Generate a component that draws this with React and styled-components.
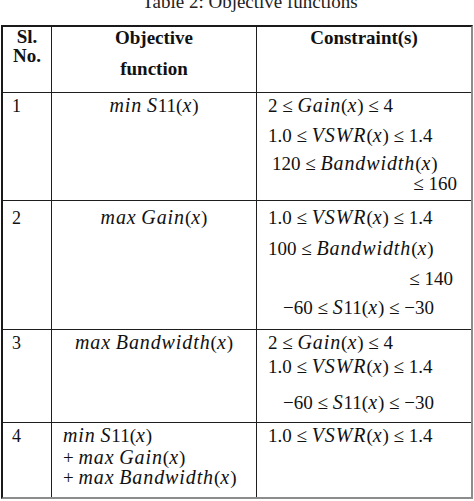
import styled, { createGlobalStyle } from "styled-components";

const GlobalStyle = createGlobalStyle`
    html, body {
        margin: 0;
        background: #fff;
    }
    body {
        font-family: "Liberation Serif", "Times New Roman", serif;
        color: #111;
    }
`;

const rows = [
    {
        no: "1",
        top: 3,
        objAlign: "center",
        obj: [{ t: "min S11(x)" }],
        cons: [
            { t: "2 ≤ Gain(x) ≤ 4" },
            { t: "1.0 ≤ VSWR(x) ≤ 1.4", gap: 10 },
            { t: "120 ≤ Bandwidth(x)", gap: 8, indent: 4 },
            { t: "≤ 160", align: "right" },
        ],
    },
    {
        no: "2",
        top: 7,
        objAlign: "center",
        obj: [{ t: "max Gain(x)" }],
        cons: [
            { t: "1.0 ≤ VSWR(x) ≤ 1.4" },
            { t: "100 ≤ Bandwidth(x)", gap: 11 },
            { t: "≤ 140", gap: 10, align: "right", right: 4 },
            { t: "−60 ≤ S11(x) ≤ −30", gap: 9, indent: 15 },
        ],
    },
    {
        no: "3",
        top: 3,
        objAlign: "center",
        obj: [{ t: "max Bandwidth(x)" }],
        cons: [
            { t: "2 ≤ Gain(x) ≤ 4" },
            { t: "1.0 ≤ VSWR(x) ≤ 1.4", gap: 4 },
            { t: "−60 ≤ S11(x) ≤ −30", gap: 16, indent: 15 },
        ],
    },
    {
        no: "4",
        top: 3,
        objAlign: "left",
        obj: [
            { t: "min S11(x)" },
            { t: "+ max Gain(x)", gap: 2 },
            { t: "+ max Bandwidth(x)" },
        ],
        cons: [{ t: "1.0 ≤ VSWR(x) ≤ 1.4" }],
    },
];

// letters italic, digits and signs upright, like Word's math font
function Formula({ text }) {
    return text
        .split(/([A-Za-z]+)/)
        .map((part, i) =>
            /[A-Za-z]/.test(part) ? <Var key={i}>{part}</Var> : part
        );
}

export default function App() {
    return (
        <>
            <GlobalStyle />
            <Page>
                <Caption>Table 2: Objective functions</Caption>
                <Table>
                    <Cell>
                        <Head>Sl.</Head>
                        <Head>No.</Head>
                    </Cell>
                    <Cell>
                        <Head $gap={1}>Objective</Head>
                        <Head $gap={12}>function</Head>
                    </Cell>
                    <Cell $lastCol>
                        <Head $gap={1}>Constraint(s)</Head>
                    </Cell>

                    {rows.map((row, r) => {
                        const lastRow = r === rows.length - 1;
                        return [
                            <NumCell key={`n${r}`} $top={row.top} $lastRow={lastRow}>
                                {row.no}
                            </NumCell>,
                            <ObjCell
                                key={`o${r}`}
                                $top={row.top}
                                $align={row.objAlign}
                                $lastRow={lastRow}
                            >
                                {row.obj.map((l, i) => (
                                    <Line key={i} $gap={l.gap}>
                                        <Formula text={l.t} />
                                    </Line>
                                ))}
                            </ObjCell>,
                            <ConsCell
                                key={`c${r}`}
                                $top={row.top}
                                $lastRow={lastRow}
                                $lastCol
                            >
                                {row.cons.map((l, i) => (
                                    <Line
                                        key={i}
                                        $gap={l.gap}
                                        $indent={l.indent}
                                        $align={l.align}
                                        $right={l.right}
                                    >
                                        <Formula text={l.t} />
                                    </Line>
                                ))}
                            </ConsCell>,
                        ];
                    })}
                </Table>
            </Page>
        </>
    );
}

const Page = styled.div`
    width: 474px;
    height: 501px;
    overflow: hidden;
`;

const Caption = styled.div`
    margin-top: -8px;
    padding-left: 26px;
    font-size: 19px;
    line-height: 19px;
    text-align: center;
    color: #222;
`;

const Table = styled.div`
    margin: 14px 0 0 1px;
    width: 472px;
    height: 474px;
    box-sizing: border-box;
    border: 2px solid;
    border-color: #1a1a1a #8c8c8c #8c8c8c #1a1a1a;
    display: grid;
    grid-template-columns: 49px 205px 1fr;
    grid-template-rows: 66px 108px 129px 93px 1fr;
`;

const Cell = styled.div`
    box-sizing: border-box;
    min-width: 0;
    border-right: ${(p) => (p.$lastCol ? "none" : "1px solid #1e1e1e")};
    border-bottom: ${(p) => (p.$lastRow ? "none" : "1px solid #1e1e1e")};
    padding-top: ${(p) => p.$top || 0}px;
`;

const Head = styled.div`
    margin-top: ${(p) => p.$gap || 0}px;
    font-weight: bold;
    font-size: 19px;
    line-height: 19px;
    text-align: center;
`;

const NumCell = styled(Cell)`
    padding-left: 9px;
    font-size: 18px;
    line-height: 20px;
`;

const ObjCell = styled(Cell)`
    padding-left: ${(p) => (p.$align === "left" ? "11px" : "0")};
    text-align: ${(p) => p.$align};
    font-size: 19px;
    line-height: 20px;
`;

const ConsCell = styled(Cell)`
    padding-left: 11px;
    padding-right: 14px;
    font-size: 19px;
    line-height: 20px;
`;

const Line = styled.div`
    height: 20px;
    margin-top: ${(p) => p.$gap || 0}px;
    padding-left: ${(p) => p.$indent || 0}px;
    padding-right: ${(p) => p.$right || 0}px;
    text-align: ${(p) => p.$align || "inherit"};
    white-space: nowrap;
`;

const Var = styled.span`
    font-style: italic;
    font-size: 20px;
    line-height: 0;
    letter-spacing: 0.9px;
`;
